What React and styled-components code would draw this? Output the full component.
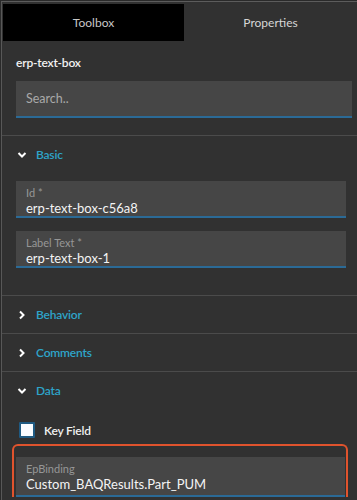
import React from "react";
import styled, { createGlobalStyle } from "styled-components";

const Global = createGlobalStyle`
  html, body { margin: 0; padding: 0; background: #2a2a2a; }
  body { font-family: Lato, "Noto Sans", sans-serif; overflow: hidden; }
  * { box-sizing: border-box; }
`;

const Shell = styled.div`
  padding: 1px 0 0 1px;
  background: #2a2a2a;
  height: 500px;
`;

const Panel = styled.div`
  height: 100%;
  background: #313131;
  border-top: 1px solid #5c5c5c;
  border-left: 1px solid #585858;
  padding-top: 2px;
  display: flex;
  flex-direction: column;
`;

const Tabs = styled.div`
  display: flex;
  height: 37px;
  padding-left: 1px;
`;

const Tab = styled.div`
  flex: ${(p) => (p.$w ? `0 0 ${p.$w}px` : "1")};
  display: flex;
  align-items: center;
  justify-content: center;
  background: ${(p) => (p.$active ? "#000" : "transparent")};
  color: ${(p) => (p.$active ? "#c8c8c8" : "#d6d6d6")};
  font-size: 12px;
`;

const Head = styled.div`
  padding: 14px 5px 0 14px;
`;

const Title = styled.div`
  color: #f2f2f2;
  font-size: 12px;
  font-weight: 600;
  letter-spacing: -0.2px;
  height: 16px;
  line-height: 16px;
  margin-bottom: 10px;
`;

const Input = styled.div`
  height: 37px;
  background: #464646;
  border-bottom: 2px solid #2b6a96;
  display: flex;
  align-items: center;
  padding-left: 10px;
  color: #a9a9a9;
  font-size: 12.5px;
`;

const Section = styled.div`
  border-top: 1px solid #4b4b4b;
  margin-top: ${(p) => p.$mt || 0}px;
`;

const SectionHead = styled.div`
  height: 37px;
  display: flex;
  align-items: center;
  padding-left: 15px;
  gap: 9px;
  color: #2ea4c9;
  font-size: 12px;
  font-weight: 600;
  letter-spacing: -0.2px;
`;

const Chevron = ({ open }) => (
  <svg width="10" height="10" viewBox="0 0 10 10">
    <path
      d={open ? "M1.5 3 L5 6.5 L8.5 3" : "M3 1.5 L6.5 5 L3 8.5"}
      fill="none"
      stroke="#fff"
      strokeWidth="2"
    />
  </svg>
);

const SectionBody = styled.div`
  padding: 8px 11px 27px 14px;
  display: flex;
  flex-direction: column;
  gap: 13px;
`;

const Field = styled.div`
  height: ${(p) => p.$h || 37}px;
  background: #464646;
  border-bottom: 2px solid #2b6a96;
  padding: 5px 10px 0;
  display: flex;
  flex-direction: column;
`;

const Label = styled.div`
  color: #969696;
  font-size: 11px;
  line-height: 14px;
`;

const Value = styled.div`
  color: #f4f4f4;
  font-size: 13px;
  line-height: 16px;
`;

const CheckRow = styled.div`
  display: flex;
  align-items: center;
  gap: 9px;
  padding: 13px 0 0 17px;
  color: #f0f0f0;
  font-size: 12px;
  font-weight: 600;
  letter-spacing: -0.2px;
`;

const Box = styled.div`
  width: 16px;
  height: 16px;
  background: #fafcff;
  border: 2px solid #1f5a82;
  border-radius: 1px;
`;

const Highlight = styled.div`
  margin: 6px 9px 0 10px;
  border: 2px solid #e0532d;
  border-bottom: none;
  border-radius: 6px 6px 0 0;
  padding: 11px 1px 0 2px;
  flex: 1;
`;

export default function App() {
  return (
    <>
      <Global />
      <Shell>
        <Panel>
          <Tabs>
            <Tab $active $w={181}>Toolbox</Tab>
            <Tab>Properties</Tab>
          </Tabs>
          <Head>
            <Title>erp-text-box</Title>
            <Input>Search..</Input>
          </Head>
          <Section $mt={17}>
            <SectionHead>
              <Chevron open />
              Basic
            </SectionHead>
            <SectionBody>
              <Field>
                <Label>Id *</Label>
                <Value>erp-text-box-c56a8</Value>
              </Field>
              <Field>
                <Label>Label Text *</Label>
                <Value>erp-text-box-1</Value>
              </Field>
            </SectionBody>
          </Section>
          <Section>
            <SectionHead>
              <Chevron />
              Behavior
            </SectionHead>
          </Section>
          <Section>
            <SectionHead>
              <Chevron />
              Comments
            </SectionHead>
          </Section>
          <Section>
            <SectionHead>
              <Chevron open />
              Data
            </SectionHead>
            <CheckRow>
              <Box />
              Key Field
            </CheckRow>
            <Highlight>
              <Field $h={40}>
                <Label>EpBinding</Label>
                <Value>Custom_BAQResults.Part_PUM</Value>
              </Field>
            </Highlight>
          </Section>
        </Panel>
      </Shell>
    </>
  );
}
